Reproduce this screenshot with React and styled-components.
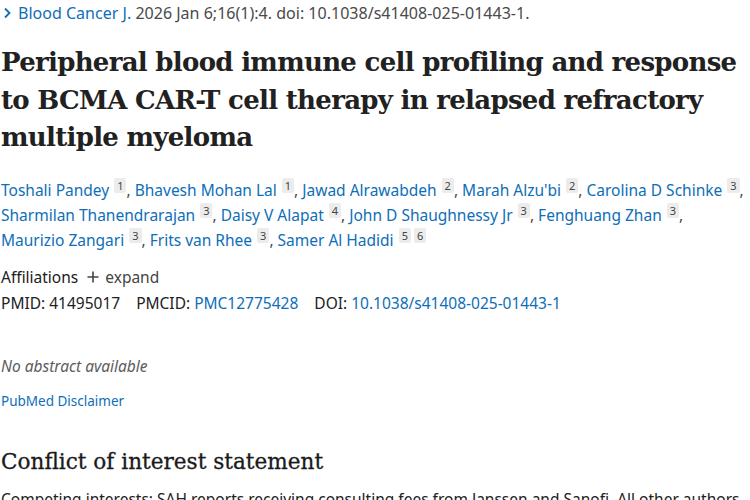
import React from "react";
import styled, { createGlobalStyle } from "styled-components";

const Global = createGlobalStyle`
  html, body { margin: 0; padding: 0; background: #fff; }
  body { font-family: "Noto Sans", "Open Sans", sans-serif; color: #212121; overflow: hidden; }
`;

const Page = styled.div`
  width: 750px;
  height: 500px;
  overflow: hidden;
  padding: 0 0 0 1px;
  box-sizing: border-box;
`;

const Citation = styled.div`
  display: flex;
  align-items: center;
  gap: 6px;
  font-size: 16.05px;
  line-height: 26px;
  color: #4a4a4a;
  padding-left: 2px;
`;

const Link = styled.a`
  color: #0e6eb8;
  text-decoration: none;
`;

const Title = styled.h1`
  font-family: "DejaVu Serif", serif;
  font-weight: bold;
  font-size: 26px;
  line-height: 37.5px;
  color: #212121;
  margin: 18px 0 0 0;
  letter-spacing: -0.7px;
`;

const Authors = styled.div`
  margin-top: 21px;
  font-size: 15.5px;
  line-height: 25px;
`;

const Author = styled.span`
  white-space: nowrap;
`;

const Sup = styled.sup`
  display: inline-block;
  font-size: 11px;
  line-height: 15px;
  background: #ececec;
  color: #444;
  padding: 0 3px;
  margin-left: 5px;
  vertical-align: 6px;
  border-radius: 2px;
  & + & { margin-left: 3px; }
`;

const Comma = styled.span`
  color: #4a4a4a;
`;

const Affil = styled.div`
  margin-top: 11px;
  font-size: 15.5px;
  line-height: 26px;
  display: flex;
  align-items: center;
  gap: 9px;
`;

const Expand = styled.span`
  display: inline-flex;
  align-items: center;
  gap: 6px;
  color: #444;
`;

const Ids = styled.div`
  font-size: 15.5px;
  line-height: 27px;
  display: flex;
  gap: 16px;
`;

const Label = styled.span`
  color: #212121;
`;

const NoAbstract = styled.div`
  margin-top: 36px;
  font-style: italic;
  font-size: 15.5px;
  line-height: 26px;
  color: #5c5c5c;
`;

const Disclaimer = styled.div`
  margin-top: 11px;
  font-size: 13.5px;
  line-height: 22px;
`;

const H2 = styled.h2`
  font-family: "DejaVu Serif", serif;
  font-weight: normal;
  font-size: 21.6px;
  line-height: 30px;
  margin: 35px 0 0 0;
  color: #1a1a1a;
  -webkit-text-stroke: 0.3px #1a1a1a;
`;

const Para = styled.p`
  margin: 10px 0 0 0;
  font-size: 15.5px;
  line-height: 24px;
  white-space: nowrap;
`;

const authors = [
  ["Toshali Pandey", ["1"]],
  ["Bhavesh Mohan Lal", ["1"]],
  ["Jawad Alrawabdeh", ["2"]],
  ["Marah Alzu'bi", ["2"]],
  ["Carolina D Schinke", ["3"]],
  ["Sharmilan Thanendrarajan", ["3"]],
  ["Daisy V Alapat", ["4"]],
  ["John D Shaughnessy Jr", ["3"]],
  ["Fenghuang Zhan", ["3"]],
  ["Maurizio Zangari", ["3"]],
  ["Frits van Rhee", ["3"]],
  ["Samer Al Hadidi", ["5", "6"]],
];

export default function App() {
  return (
    <Page>
      <Global />
      <Citation>
        <svg width="9" height="12" viewBox="0 0 9 12">
          <path d="M2 1.5 L6.5 6 L2 10.5" fill="none" stroke="#0e6eb8" strokeWidth="1.8" />
        </svg>
        <span>
          <Link href="#">Blood Cancer J.</Link> 2026 Jan 6;16(1):4. doi: 10.1038/s41408-025-01443-1.
        </span>
      </Citation>
      <Title>
        Peripheral blood immune cell profiling and response to BCMA CAR-T cell therapy in relapsed refractory multiple myeloma
      </Title>
      <Authors>
        {authors.map(([name, sups], i) => (
          <React.Fragment key={name}>
            <Author>
              <Link href="#">{name}</Link>
              {sups.map((s) => (
                <Sup key={s}>{s}</Sup>
              ))}
              {i < authors.length - 1 && <Comma>,</Comma>}
            </Author>{" "}
          </React.Fragment>
        ))}
      </Authors>
      <Affil>
        <span>Affiliations</span>
        <Expand>
          <svg width="12" height="12" viewBox="0 0 12 12">
            <path d="M6 0.5 V11.5 M0.5 6 H11.5" stroke="#444" strokeWidth="1.6" />
          </svg>
          expand
        </Expand>
      </Affil>
      <Ids>
        <span><Label>PMID: </Label>41495017</span>
        <span><Label>PMCID: </Label><Link href="#">PMC12775428</Link></span>
        <span><Label>DOI: </Label><Link href="#">10.1038/s41408-025-01443-1</Link></span>
      </Ids>
      <NoAbstract>No abstract available</NoAbstract>
      <Disclaimer><Link href="#">PubMed Disclaimer</Link></Disclaimer>
      <H2>Conflict of interest statement</H2>
      <Para>Competing interests: SAH reports receiving consulting fees from Janssen and Sanofi. All other authors</Para>
    </Page>
  );
}
